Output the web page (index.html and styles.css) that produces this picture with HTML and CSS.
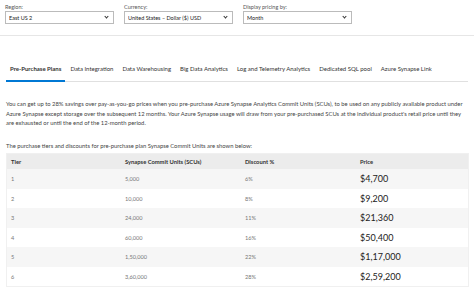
FILE: index.html
```html
<!DOCTYPE html>
<html lang="en">
<head>
<meta charset="UTF-8">
<title>Azure Synapse pricing</title>
<link rel="stylesheet" href="styles.css">
</head>
<body>

<div id="filters">
<div class="field">
<label for="region">Region:</label>
<div class="pickwrap"><select id="region" class="picker"><option>East US 2</option></select></div>
</div>
<div class="field">
<label for="currency">Currency:</label>
<div class="pickwrap"><select id="currency" class="picker"><option>United States – Dollar ($) USD</option></select></div>
</div>
<div class="field">
<label for="period">Display pricing by:</label>
<div class="pickwrap"><select id="period" class="picker"><option>Month</option></select></div>
</div>
</div><!-- filters -->

<div id="tabs">
<span class="tab active">Pre-Purchase Plans</span>
<span class="tab">Data Integration</span>
<span class="tab">Data Warehousing</span>
<span class="tab">Big Data Analytics</span>
<span class="tab">Log and Telemetry Analytics</span>
<span class="tab">Dedicated SQL pool</span>
<span class="tab">Azure Synapse Link</span>
</div><!-- tabs -->

<div id="contents">
<p>You can get up to 28% savings over pay-as-you-go prices when you pre-purchase Azure Synapse Analytics Commit Units (SCUs), to be used on any publicly available product under Azure Synapse except storage over the subsequent 12 months. Your Azure Synapse usage will draw from your pre-purchased SCUs at the individual product's retail price until they are exhausted or until the end of the 12-month period.</p>
<p>The purchase tiers and discounts for pre-purchase plan Synapse Commit Units are shown below:</p>

<table class="tiers">
<tr><th class="c1">Tier</th><th class="c2">Synapse Commit Units (SCUs)</th><th class="c3">Discount %</th><th>Price</th></tr>
<tr><td>1</td><td>5,000</td><td>6%</td><td class="price">$4,700</td></tr>
<tr><td>2</td><td>10,000</td><td>8%</td><td class="price">$9,200</td></tr>
<tr><td>3</td><td>24,000</td><td>11%</td><td class="price">$21,360</td></tr>
<tr><td>4</td><td>60,000</td><td>16%</td><td class="price">$50,400</td></tr>
<tr><td>5</td><td>1,50,000</td><td>22%</td><td class="price">$1,17,000</td></tr>
<tr><td>6</td><td>3,60,000</td><td>28%</td><td class="price">$2,59,200</td></tr>
</table>
</div><!-- contents -->

</body>
</html>
```

FILE: styles.css
```css
body {
margin: 0;
padding: 0;
background: #fff;
color: #333;
font-family: Lato, "Open Sans", sans-serif;
font-size: 6px;
}
#filters {
display: flex;
gap: 10px;
padding: 4px 6px 11px 5px;
border-bottom: 1px solid #e6e6e6;
}
.field {
display: flex;
flex-direction: column;
width: 109px;
}
.field label {
font-size: 5.5px;
color: #555;
line-height: 7px;
}
.pickwrap {
position: relative;
}
.pickwrap::after {
content: "";
position: absolute;
right: 6px;
top: 4px;
width: 2px;
height: 2px;
border-right: 1px solid #333;
border-bottom: 1px solid #333;
transform: rotate(45deg);
pointer-events: none;
}
.picker {
-webkit-appearance: none;
appearance: none;
width: 100%;
height: 13px;
margin: 0;
padding: 0 3px;
border: 1px solid #bbb;
border-radius: 0;
background: #fff;
font-family: inherit;
font-size: 5.5px;
color: #222;
}
#tabs {
display: flex;
gap: 1px;
margin: 29px 6px 0 6px;
border-bottom: 1px solid #e0e0e0;
white-space: nowrap;
}
.tab {
padding: 0 4px 8px 4px;
font-size: 6px;
color: #333;
border-bottom: 2px solid transparent;
margin-bottom: -1px;
}
.tab.active {
font-weight: 700;
border-bottom-color: #0078d4;
}
#contents {
padding: 17px 5px 0 6px;
}
#contents p {
margin: 0 0 13px 0;
font-size: 5.85px;
line-height: 9.5px;
color: #444;
}
#contents p + p {
margin-bottom: 3px;
}
.tiers {
width: 100%;
table-layout: fixed;
border-collapse: collapse;
border: 1px solid #f0f0f0;
}
.tiers th {
background: #ececec;
text-align: left;
font-weight: 700;
font-size: 5.8px;
color: #333;
height: 15px;
padding: 0 4px;
}
.tiers td {
height: 19.5px;
padding: 0 4px;
font-size: 5.6px;
color: #777;
}
.tiers tr:nth-child(even) td {
background: #f6f6f6;
}
.tiers .c1 {
width: 106px;
}
.tiers .c2 {
width: 112px;
}
.tiers .c3 {
width: 107px;
}
.tiers td.price {
font-size: 9px;
color: #222;
}
```
